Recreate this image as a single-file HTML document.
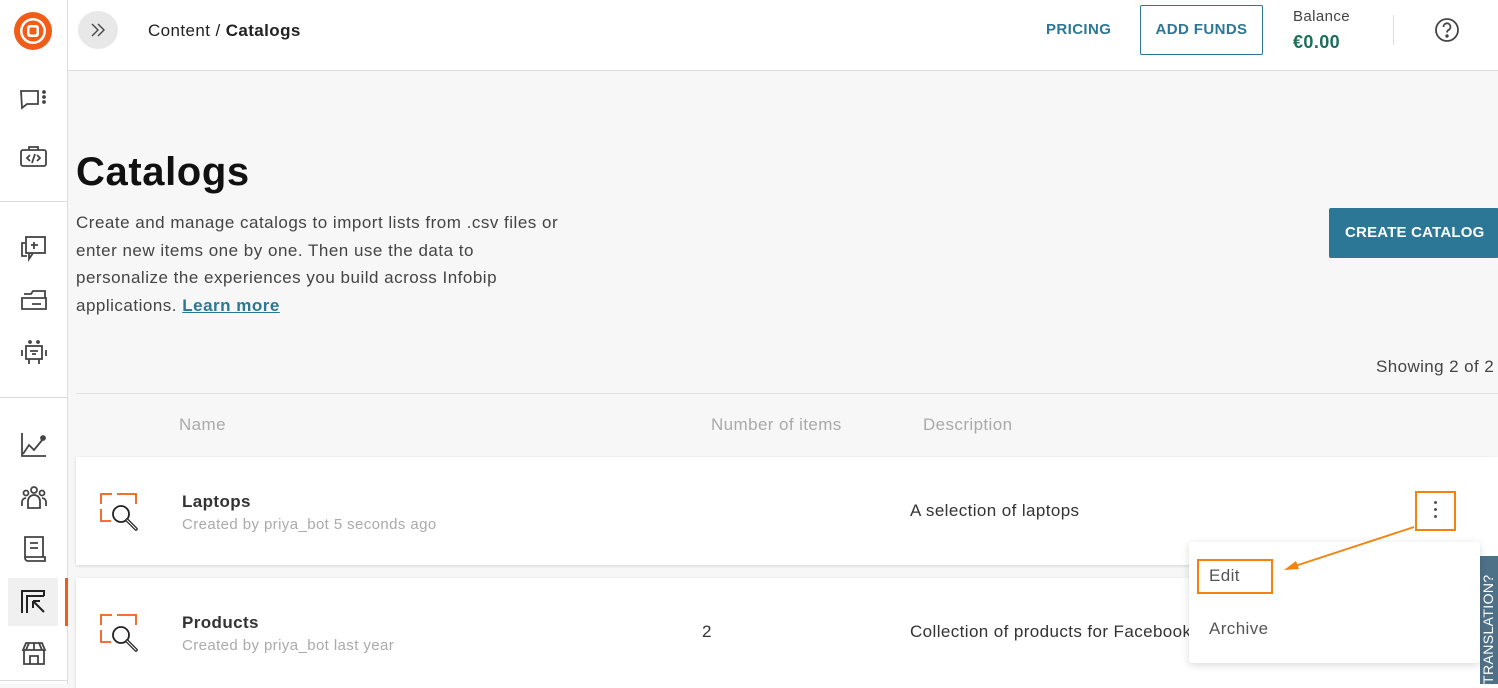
<!DOCTYPE html>
<html><head><meta charset="utf-8"><style>
*{box-sizing:border-box;margin:0;padding:0}
body{width:1498px;height:684px;overflow:hidden;background:#f7f7f7;font-family:"Liberation Sans",sans-serif;position:relative;color:#222;letter-spacing:.4px}
.side{position:absolute;left:0;top:0;width:68px;height:684px;background:#fff;border-right:1px solid #ddd}
.top{position:absolute;left:68px;top:0;right:0;height:71px;background:#fff;border-bottom:1px solid #ddd}
.abs{position:absolute}
.ic{position:absolute;left:19px;width:30px;height:30px}
.hr{position:absolute;left:0;width:67px;height:1px;background:#ddd}
.card{position:absolute;left:76px;right:0;background:#fff;box-shadow:0 1px 3px rgba(0,0,0,.15)}
.gray{color:#aaa}
</style></head><body>
<div class="side">
 <svg class="abs" style="left:13px;top:11px" width="40" height="40" viewBox="0 0 40 40"><circle cx="20" cy="20" r="19" fill="#f25c19"/><circle cx="20" cy="20" r="13" fill="#fff"/><circle cx="20" cy="20" r="10.5" fill="#f25c19"/><rect x="14" y="14" width="12" height="12" rx="3" fill="#fff"/><rect x="16.5" y="16.5" width="7" height="7" rx="1.5" fill="#f25c19"/></svg>
 <svg class="ic" style="top:87px" viewBox="0 0 30 30" fill="none" stroke="#444" stroke-width="1.8"><path d="M2 4h17v13H8l-5 4z"/><circle cx="25" cy="5" r="1" fill="#444"/><circle cx="25" cy="10" r="1" fill="#444"/><circle cx="25" cy="15" r="1" fill="#444"/></svg>
 <svg class="ic" style="top:142px" viewBox="0 0 30 30" fill="none" stroke="#444" stroke-width="1.8"><rect x="2" y="8" width="25" height="16" rx="2"/><path d="M10 8V5h9v3M11 13l-3 3 3 3M18 13l3 3-3 3M16 12l-3 9"/></svg>
 <div class="hr" style="top:201px"></div>
 <svg class="ic" style="top:233px" viewBox="0 0 30 30" fill="none" stroke="#444" stroke-width="1.8"><path d="M6 10H3v13h5"/><rect x="7" y="4" width="19" height="16"/><path d="M12 12h7M15 9v7M10 20v6l4-6"/></svg>
 <svg class="ic" style="top:284px" viewBox="0 0 30 30" fill="none" stroke="#444" stroke-width="1.8"><path d="M5 10h7l2-3h12v7M3 14h24v11H3zM13 20h9"/></svg>
 <svg class="ic" style="top:338px" viewBox="0 0 30 30" fill="none" stroke="#444" stroke-width="1.8"><rect x="7" y="8" width="16" height="13"/><path d="M3 12v6M27 12v6M10 21v5M20 21v5M11 13h8M13 16h4"/><circle cx="11" cy="4" r="1" fill="#444"/><circle cx="19" cy="4" r="1" fill="#444"/></svg>
 <div class="hr" style="top:397px"></div>
 <svg class="ic" style="top:430px" viewBox="0 0 30 30" fill="none" stroke="#444" stroke-width="1.8"><path d="M3 3v23h24M4 24l6-9 5 5 9-11"/><circle cx="24" cy="8" r="2" fill="#444"/></svg>
 <svg class="ic" style="top:482px" viewBox="0 0 30 30" fill="none" stroke="#444" stroke-width="1.8"><circle cx="15" cy="8" r="3"/><path d="M9 26v-7a6 6 0 0 1 12 0v7zM3 24v-4a4 4 0 0 1 4-4M27 24v-4a4 4 0 0 0-4-4"/><circle cx="7" cy="11" r="2.5"/><circle cx="23" cy="11" r="2.5"/></svg>
 <svg class="ic" style="top:534px" viewBox="0 0 30 30" fill="none" stroke="#444" stroke-width="1.8"><path d="M6 24V3h18v20M6 24a3 3 0 0 0 3 3h17v-4H9a3 3 0 0 0-3 1M11 9h8M11 14h8"/></svg>
 <div class="abs" style="left:8px;top:578px;width:50px;height:48px;background:#f0f0f0"></div>
 <div class="abs" style="left:65px;top:578px;width:3px;height:48px;background:#f25c19"></div>
 <svg class="ic" style="top:587px" viewBox="0 0 30 30" fill="none" stroke="#222" stroke-width="2"><path d="M3 26V4h22v5M8 26V9h17"/><path d="M14 14l11 11M14 14v7M14 14h7"/></svg>
 <svg class="ic" style="top:638px" viewBox="0 0 30 30" fill="none" stroke="#444" stroke-width="1.8"><path d="M4 12l3-7h16l3 7zM5 12v14h20V12M11 26v-8h8v8M10 5l-3 7M15 5v7M20 5l3 7"/></svg>
 <div class="hr" style="top:680px"></div>
</div>
<div class="top">
 <div class="abs" style="left:10px;top:11px;width:40px;height:38px;border-radius:50%;background:#e8e8e8"></div>
 <svg class="abs" style="left:21px;top:21px" width="18" height="18" viewBox="0 0 18 18" fill="none" stroke="#444" stroke-width="1.4"><path d="M3 3l6 6-6 6M9 3l6 6-6 6"/></svg>
 <div class="abs" style="left:80px;top:21px;font-size:17px;color:#222">Content / <b>Catalogs</b></div>
 <div class="abs" style="left:978px;top:21px;font-size:15px;font-weight:bold;color:#2c7796">PRICING</div>
 <div class="abs" style="left:1072px;top:5px;width:123px;height:50px;border:1px solid #2c7796;border-radius:2px;font-size:15px;font-weight:bold;color:#2c7796;text-align:center;line-height:48px">ADD FUNDS</div>
 <div class="abs" style="left:1225px;top:8px;font-size:15px;color:#444">Balance</div>
 <div class="abs" style="left:1225px;top:32px;font-size:18px;font-weight:bold;color:#1f6e5a">€0.00</div>
 <div class="abs" style="left:1325px;top:15px;width:1px;height:30px;background:#ddd"></div>
 <svg class="abs" style="left:1366px;top:17px" width="26" height="26" viewBox="0 0 26 26" fill="none" stroke="#444" stroke-width="1.8"><circle cx="13" cy="13" r="11"/><path d="M9.5 10a3.5 3.5 0 1 1 5 3c-1 .6-1.5 1.2-1.5 2.5"/><circle cx="13" cy="19" r=".8" fill="#444"/></svg>
</div>
<div class="abs" style="left:76px;top:150px;font-size:40px;font-weight:bold;color:#111;letter-spacing:.6px">Catalogs</div>
<div class="abs" style="left:76px;top:209px;white-space:nowrap;font-size:17px;line-height:27.5px;color:#444;letter-spacing:.5px">Create and manage catalogs to import lists from .csv files or<br>enter new items one by one. Then use the data to<br>personalize the experiences you build across Infobip<br>applications. <a style="color:#2c7796;font-weight:bold;text-decoration:underline">Learn more</a></div>
<div class="abs" style="left:1329px;top:208px;width:170px;height:50px;background:#2c7796;color:#fff;font-size:15px;font-weight:bold;line-height:50px;padding-left:16px;border-radius:2px;letter-spacing:.2px">CREATE CATALOG</div>
<div class="abs" style="left:1376px;top:357px;font-size:17px;color:#444;white-space:nowrap">Showing 2 of 2</div>
<div class="abs" style="left:76px;top:393px;right:0;height:1px;background:#e2e2e2"></div>
<div class="abs gray" style="left:179px;top:415px;font-size:17px">Name</div>
<div class="abs gray" style="left:711px;top:415px;font-size:17px">Number of items</div>
<div class="abs gray" style="left:923px;top:415px;font-size:17px">Description</div>
<div class="card" style="top:457px;height:108px">
 <svg class="abs" style="left:24px;top:36px" width="42" height="42" viewBox="0 0 42 42" fill="none"><path d="M1 11V1h11M17 1h19v10M1 16v12h10" stroke="#f25c19" stroke-width="1.8"/><circle cx="21" cy="21" r="8" stroke="#222" stroke-width="1.8"/><path d="M27 27l9 9" stroke="#222" stroke-width="3.5" stroke-linecap="round"/><path d="M27 27l9 9" stroke="#fff" stroke-width="1" stroke-linecap="round"/></svg>
 <div class="abs" style="left:106px;top:35px;font-size:17px;font-weight:bold;color:#333">Laptops</div>
 <div class="abs gray" style="left:106px;top:59px;font-size:15px">Created by priya_bot 5 seconds ago</div>
 <div class="abs" style="left:834px;top:44px;font-size:17px;color:#333">A selection of laptops</div>
 <div class="abs" style="left:1339px;top:34px;width:41px;height:40px;border:2px solid #f5820f"></div>
 <div class="abs" style="left:1358px;top:44px;width:3px;height:3px;border-radius:50%;background:#555;box-shadow:0 7px 0 #555,0 14px 0 #555"></div>
</div>
<div class="card" style="top:578px;height:110px">
 <svg class="abs" style="left:24px;top:36px" width="42" height="42" viewBox="0 0 42 42" fill="none"><path d="M1 11V1h11M17 1h19v10M1 16v12h10" stroke="#f25c19" stroke-width="1.8"/><circle cx="21" cy="21" r="8" stroke="#222" stroke-width="1.8"/><path d="M27 27l9 9" stroke="#222" stroke-width="3.5" stroke-linecap="round"/><path d="M27 27l9 9" stroke="#fff" stroke-width="1" stroke-linecap="round"/></svg>
 <div class="abs" style="left:106px;top:35px;font-size:17px;font-weight:bold;color:#333">Products</div>
 <div class="abs gray" style="left:106px;top:59px;font-size:15px">Created by priya_bot last year</div>
 <div class="abs" style="left:626px;top:44px;font-size:17px;color:#333">2</div>
 <div class="abs" style="left:834px;top:44px;font-size:17px;color:#333;white-space:nowrap">Collection of products for Facebook</div>
</div>
<div class="abs" style="left:1480px;top:556px;width:18px;height:128px;background:#4f7188;color:#fff;font-size:14px;writing-mode:vertical-rl;transform:rotate(180deg);overflow:hidden;white-space:nowrap;text-align:left">TRANSLATION?</div>
<div class="abs" style="left:1189px;top:542px;width:291px;height:121px;background:#fff;box-shadow:0 2px 8px rgba(0,0,0,.15);border-radius:3px"></div>
<div class="abs" style="left:1197px;top:559px;width:76px;height:35px;border:2px solid #f5820f"></div>
<div class="abs" style="left:1209px;top:566px;font-size:17px;color:#555">Edit</div>
<div class="abs" style="left:1209px;top:619px;font-size:17px;color:#555">Archive</div>
<svg class="abs" style="left:1280px;top:520px" width="140" height="55"><path d="M134 7L12 47" stroke="#f5820f" stroke-width="1.8"/><path d="M4 50l12-9 3 8z" fill="#f5820f"/></svg>
</body></html>
